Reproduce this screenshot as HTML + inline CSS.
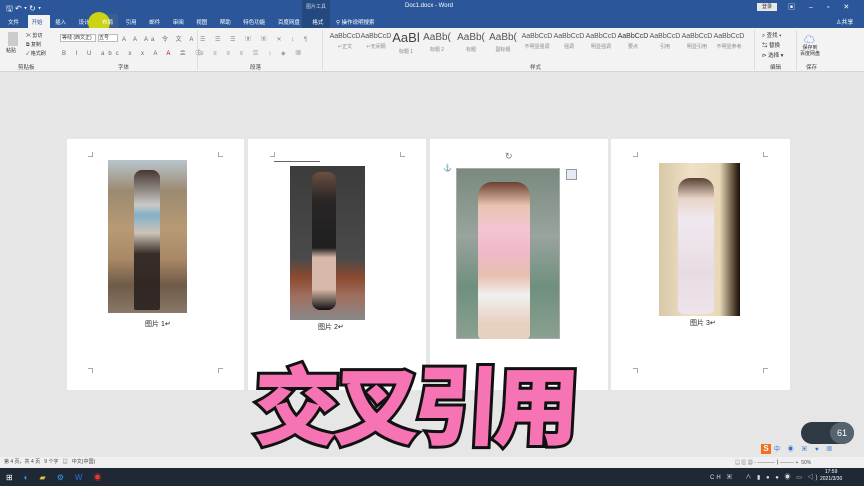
<!DOCTYPE html><html><head><meta charset="utf-8"><style>
*{margin:0;padding:0;box-sizing:border-box}
body{width:864px;height:486px;overflow:hidden;position:relative;background:#e6e6e6;font-family:"Liberation Sans","Noto Sans CJK SC",sans-serif;font-size:6px;color:#333}
.a{position:absolute;white-space:nowrap}
.w{color:#fff}
.page{position:absolute;background:#fff;top:139px;height:251px}
.cap{position:absolute;font-size:7px;color:#222}
.g{position:absolute;top:63px;font-size:5.5px;color:#444}
.sty{position:absolute;top:33px;width:38px;text-align:center;font-size:7px;color:#555;white-space:nowrap}
.sty i{display:block;font-style:normal;font-size:5px;color:#888;margin-top:3px}
.big{position:absolute;left:254px;top:338px;font-size:86px;font-weight:900;font-family:"Noto Sans CJK SC",sans-serif;color:#f774b4;-webkit-text-stroke:6px #111;paint-order:stroke fill;letter-spacing:-6px;transform:skewX(-3deg);white-space:nowrap}
.crn{position:absolute;width:5px;height:5px;border-color:#aaa;border-style:solid;border-width:0}
</style></head><body>
<div class="a" style="left:0;top:0;width:864px;height:28px;background:#2b579a"></div>
<div class="a" style="left:302px;top:0;width:28px;height:28px;background:#24497f"></div>
<div class="a w" style="left:6px;top:3px;font-size:8px">🖫 ↶ ▾ ↻ ▾</div>
<div class="a w" style="left:306px;top:3px;font-size:5px;color:#c8d4e8">图片工具</div>
<div class="a w" style="left:405px;top:3px;font-size:6px">Doc1.docx - Word</div>
<div class="a" style="left:757px;top:3px;width:20px;height:8px;background:#e8e8e8;font-size:5px;color:#333;text-align:center;line-height:8px">登录</div>
<div class="a w" style="left:788px;top:2px;font-size:7px;letter-spacing:14px">▣–▫✕</div>
<div class="a w" style="left:836px;top:17px;font-size:6px">♙共享</div>
<div class="a" style="left:28px;top:15px;width:22px;height:13px;background:#f3f3f3"></div>
<div class="a" style="left:92px;top:14px;width:26px;height:14px;background:#3a5f8f"></div>
<div class="a" style="left:88px;top:12px;width:22px;height:22px;border-radius:50%;background:rgba(230,230,0,.85)"></div>
<div class="a w" style="left:8px;top:18px;font-size:5.5px;word-spacing:11px">文件 <span style="color:#2b579a">开始</span> 插入 设计 布局 引用 邮件 审阅 视图 帮助 特色功能 百度网盘 格式</div>
<div class="a w" style="left:336px;top:18px;font-size:5.5px">⚲ 操作说明搜索</div>
<div class="a" style="left:0;top:28px;width:864px;height:44px;background:#f3f3f3;border-bottom:1px solid #d6d6d6"></div>
<div class="a" style="left:8px;top:32px;width:10px;height:14px;background:#ccc"></div>
<div class="a" style="left:6px;top:47px;font-size:5px">粘贴</div>
<div class="a" style="left:26px;top:32px;font-size:5px;line-height:9px">✂ 剪切<br>⧉ 复制<br>✓ 格式刷</div>
<div class="a" style="left:60px;top:34px;width:36px;height:8px;background:#fff;border:1px solid #bbb;font-size:5px;line-height:6px;padding-left:1px">等线 (西文正)</div>
<div class="a" style="left:98px;top:34px;width:20px;height:8px;background:#fff;border:1px solid #bbb;font-size:5px;line-height:6px">五号</div>
<div class="a" style="left:122px;top:34px;font-size:6px;color:#666;letter-spacing:3px">A A Aa 令 文 A</div>
<div class="a" style="left:62px;top:48px;font-size:6px;color:#666;letter-spacing:4px">B I U abc x x A <span style="color:#c00">A</span> 亖 ㊣</div>
<div class="a" style="left:200px;top:34px;font-size:6px;color:#888;letter-spacing:4px">☰ ☰ ☰ ▣ ▣ ✕ ↕ ¶</div>
<div class="a" style="left:200px;top:48px;font-size:6px;color:#888;letter-spacing:4px">≡ ≡ ≡ ≡ ▥ ↕ ◈ ▦</div>
<div class="a" style="left:197px;top:30px;width:1px;height:40px;background:#ddd"></div>
<div class="a" style="left:322px;top:30px;width:1px;height:40px;background:#ddd"></div>
<div class="sty" style="left:326px">AaBbCcD<i>↵正文</i></div>
<div class="sty" style="left:357px">AaBbCcD<i>↵无间隔</i></div>
<div class="sty" style="left:387px;font-size:13px;top:30px;color:#444">AaBl<i>标题 1</i></div>
<div class="sty" style="left:418px;font-size:10px;top:32px">AaBb(<i>标题 2</i></div>
<div class="sty" style="left:452px;font-size:10px;top:32px">AaBb(<i>标题</i></div>
<div class="sty" style="left:484px;font-size:10px;top:32px">AaBb(<i>副标题</i></div>
<div class="sty" style="left:518px">AaBbCcD<i>不明显强调</i></div>
<div class="sty" style="left:550px">AaBbCcD<i>强调</i></div>
<div class="sty" style="left:582px">AaBbCcD<i>明显强调</i></div>
<div class="sty" style="left:614px;color:#333">AaBbCcD<i>要点</i></div>
<div class="sty" style="left:646px">AaBbCcD<i>引用</i></div>
<div class="sty" style="left:678px">AaBbCcD<i>明显引用</i></div>
<div class="sty" style="left:710px">AaBbCcD<i>不明显参考</i></div>
<div class="a" style="left:754px;top:30px;width:1px;height:40px;background:#ddd"></div>
<div class="a" style="left:762px;top:31px;font-size:5.5px;line-height:10px">⌕ 查找 ▾<br>⇆ 替换<br>⊳ 选择 ▾</div>
<div class="a" style="left:796px;top:30px;width:1px;height:40px;background:#ddd"></div>
<div class="a" style="left:804px;top:31px;font-size:11px;color:#2e75d6">☁</div>
<div class="a" style="left:800px;top:45px;font-size:5px;text-align:center;line-height:6px">保存到<br>百度网盘</div>
<div class="g" style="left:18px">剪贴板</div><div class="g" style="left:118px">字体</div><div class="g" style="left:250px">段落</div><div class="g" style="left:530px">样式</div><div class="g" style="left:770px">编辑</div><div class="g" style="left:806px">保存</div>
<div class="page" style="left:67px;width:177px"></div>
<div class="page" style="left:248px;width:178px"></div>
<div class="page" style="left:430px;width:178px"></div>
<div class="page" style="left:611px;width:179px"></div>
<div class="crn" style="left:88px;top:152px;border-right-width:1px;border-bottom-width:1px"></div>
<div class="crn" style="left:218px;top:152px;border-left-width:1px;border-bottom-width:1px"></div>
<div class="crn" style="left:270px;top:152px;border-right-width:1px;border-bottom-width:1px"></div>
<div class="crn" style="left:400px;top:152px;border-left-width:1px;border-bottom-width:1px"></div>
<div class="crn" style="left:633px;top:152px;border-right-width:1px;border-bottom-width:1px"></div>
<div class="crn" style="left:763px;top:152px;border-left-width:1px;border-bottom-width:1px"></div>
<div class="crn" style="left:88px;top:368px;border-right-width:1px;border-top-width:1px"></div>
<div class="crn" style="left:218px;top:368px;border-left-width:1px;border-top-width:1px"></div>
<div class="crn" style="left:633px;top:368px;border-right-width:1px;border-top-width:1px"></div>
<div class="crn" style="left:763px;top:368px;border-left-width:1px;border-top-width:1px"></div>
<div class="a" style="left:274px;top:161px;width:46px;height:1px;background:#666"></div>
<div class="a" style="left:108px;top:160px;width:79px;height:153px;background:linear-gradient(180deg,#b8c4cc 0%,#9c8a72 20%,#b89a74 45%,#a88866 65%,#6e5a48 82%,#8a7868 100%)"></div>
<div class="a" style="left:134px;top:170px;width:26px;height:140px;background:linear-gradient(180deg,#3a2a22 0%,#cfd0d0 25%,#7fb3d0 32%,#cfc8c0 45%,#2a2220 60%,#2a2220 100%);border-radius:8px 8px 2px 2px;opacity:.9"></div>
<div class="a" style="left:290px;top:166px;width:75px;height:154px;background:linear-gradient(180deg,#3c3c3c 0%,#4a4a4a 60%,#8a4a30 72%,#a07060 85%,#888 100%)"></div>
<div class="a" style="left:312px;top:172px;width:24px;height:138px;background:linear-gradient(180deg,#6a5040 0%,#2a2626 20%,#1f1f1f 55%,#d8b8a8 62%,#d8b8a8 85%,#111 100%);border-radius:8px"></div>
<div class="a" style="left:456px;top:168px;width:104px;height:171px;background:linear-gradient(180deg,#7a8a80 0%,#98a49c 40%,#6f8f7f 70%,#8aa090 100%);border:1px solid #aaa"></div>
<div class="a" style="left:478px;top:182px;width:52px;height:157px;background:linear-gradient(180deg,#6a4030 0%,#e8c4b0 15%,#f4c4d4 30%,#f0b8c8 45%,#e8c0b0 60%,#f0f0f0 72%,#e8d0c0 90%);border-radius:14px 14px 4px 4px"></div>
<div class="a" style="left:505px;top:151px;font-size:9px;color:#777">↻</div>
<div class="a" style="left:443px;top:164px;font-size:7px;color:#2b579a">⚓</div>
<div class="a" style="left:566px;top:169px;width:11px;height:11px;border:1px solid #999;background:#e6ecf4"></div>
<div class="a" style="left:659px;top:163px;width:81px;height:153px;background:linear-gradient(90deg,#d8c8a8 0%,#f0e0c8 40%,#e8d8b8 75%,#3a2a1a 96%,#1a1010 100%)"></div>
<div class="a" style="left:678px;top:178px;width:36px;height:136px;background:linear-gradient(180deg,#5a4034 0%,#e8d4c8 15%,#f0e8f0 30%,#e8dce4 70%,#f0e4ec 100%);border-radius:12px 12px 6px 6px"></div>
<div class="cap" style="left:145px;top:319px">图片 1↵</div>
<div class="cap" style="left:318px;top:322px">图片 2↵</div>
<div class="cap" style="left:690px;top:318px">图片 3↵</div>
<div class="big">交叉引用</div>
<div class="a" style="left:801px;top:422px;width:53px;height:22px;border-radius:11px;background:#2d3a44"></div>
<div class="a" style="left:830px;top:422px;width:24px;height:22px;border-radius:50%;background:#55636e;color:#fff;font-size:9px;line-height:22px;text-align:center">61</div>
<div class="a" style="left:761px;top:444px;width:10px;height:10px;background:#f07020;color:#fff;font-size:8px;line-height:10px;text-align:center;font-weight:bold">S</div>
<div class="a" style="left:774px;top:444px;font-size:6px;color:#2b6fd0;letter-spacing:3px">中 ◉ ▣ ♥ ▦</div>
<div class="a" style="left:0;top:457px;width:864px;height:11px;background:#f0f0f0;font-size:5px;line-height:11px;padding-left:4px;color:#444">第 4 页，共 4 页 &nbsp; 9 个字 &nbsp; ▤ &nbsp; 中文(中国)</div>
<div class="a" style="left:735px;top:459px;width:100px;font-size:5px;color:#555">▤ ▥ ▦ - ─────┃──── + &nbsp;50%</div>
<div class="a" style="left:0;top:468px;width:864px;height:18px;background:#1e2935"></div>
<div class="a" style="left:6px;top:472px;font-size:8px;color:#fff;letter-spacing:11px">⊞<span style="color:#3c9ee8">◐</span><span style="color:#e8c040">▰</span><span style="color:#3c9ee8">⚙</span><span style="color:#2b6fd0">W</span><span style="color:#e33">◉</span></div>
<div class="a" style="left:820px;top:469px;font-size:5px;color:#fff;text-align:center;line-height:7px">17:59<br>2021/3/30</div>
<div class="a" style="left:710px;top:472px;font-size:6px;color:#ddd;letter-spacing:2px">CH ▣ &nbsp; ∧ ▮ ● ● ◉ ▭ ◁)</div>
</body></html>
